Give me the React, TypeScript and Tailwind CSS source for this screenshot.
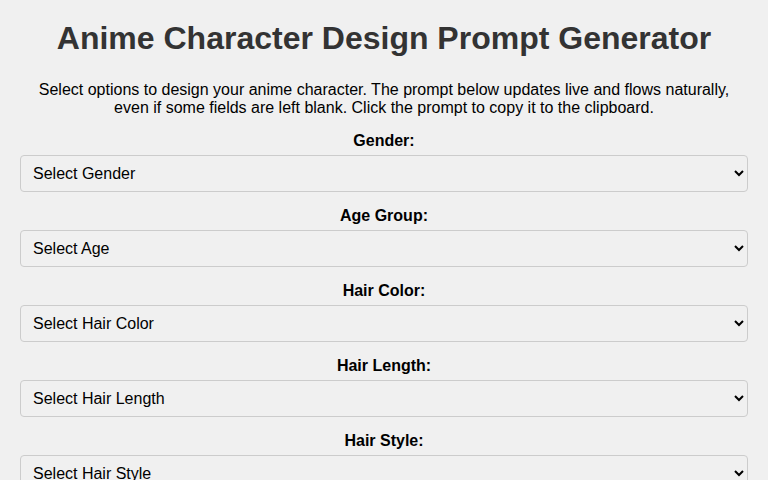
const fields = [
  { label: 'Gender:', placeholder: 'Select Gender' },
  { label: 'Age Group:', placeholder: 'Select Age' },
  { label: 'Hair Color:', placeholder: 'Select Hair Color' },
  { label: 'Hair Length:', placeholder: 'Select Hair Length' },
  { label: 'Hair Style:', placeholder: 'Select Hair Style' },
  { label: 'Eye Color:', placeholder: 'Select Eye Color' },
];

export default function App() {
  return (
    <div className="min-h-screen bg-[#f0f0f0] px-5 pt-5 pb-5 font-['Liberation_Sans',Arial,sans-serif] text-black">
      <h1 className="text-center text-[32px] font-bold leading-[37px] text-[#333]">
        Anime Character Design Prompt Generator
      </h1>
      <p className="mt-[24px] text-center text-base leading-[18px]">
        Select options to design your anime character. The prompt below updates live and flows naturally,
        even if some fields are left blank. Click the prompt to copy it to the clipboard.
      </p>
      <div className="mt-[15px] flex flex-col">
        {fields.map((f) => (
          <div key={f.label} className="mb-[15px] flex flex-col">
            <label className="mb-[5px] text-center text-base font-bold leading-[18px]">{f.label}</label>
            <select className="h-[37px] w-full rounded-[4px] border border-[#ccc] px-2 text-base">
              <option>{f.placeholder}</option>
            </select>
          </div>
        ))}
      </div>
    </div>
  );
}
